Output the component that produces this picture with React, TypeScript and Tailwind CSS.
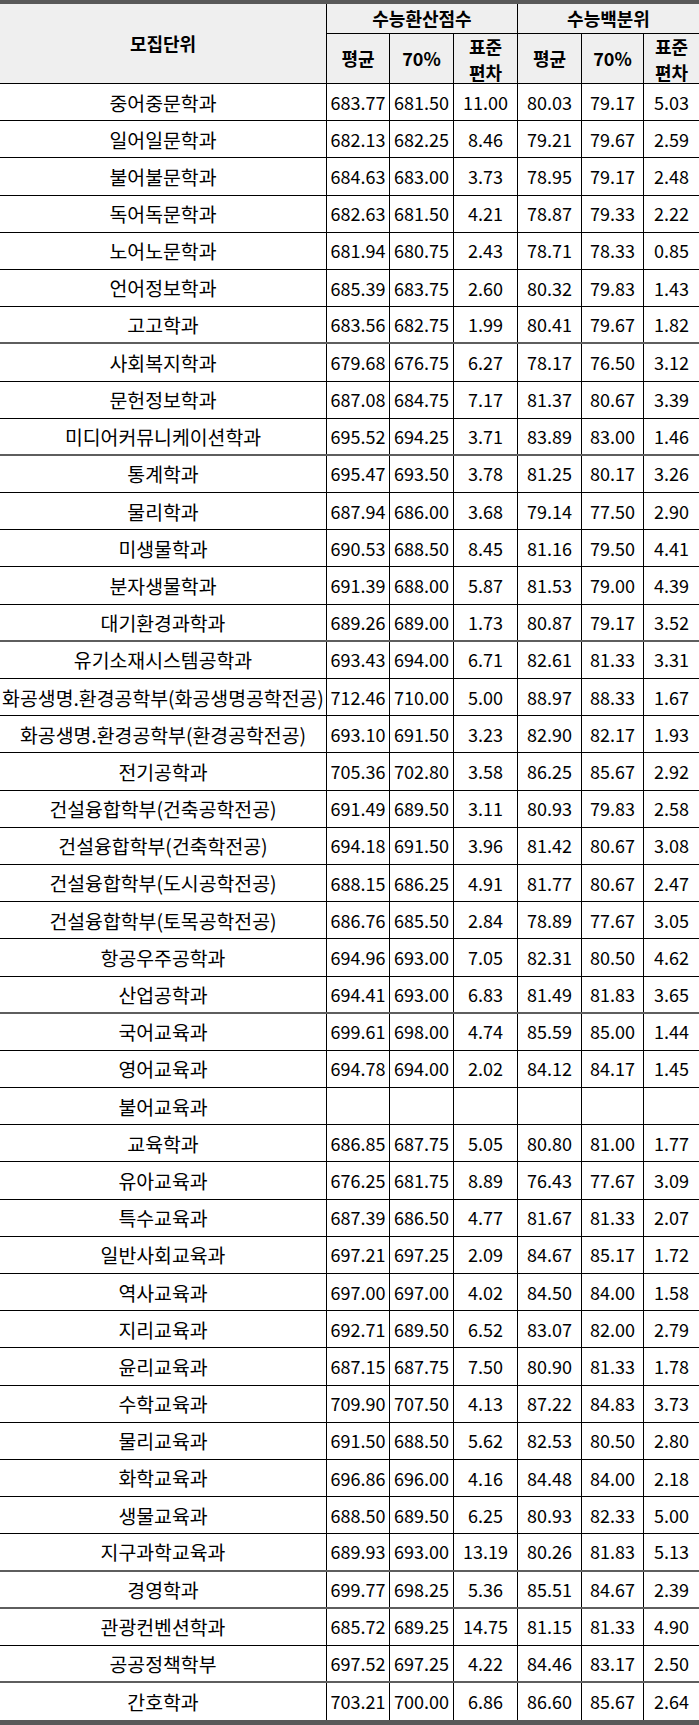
type Row = {
    name: string;
    v: string[];
    thick?: boolean;
};

const rows: Row[] = [
    { name: '중어중문학과', v: ['683.77', '681.50', '11.00', '80.03', '79.17', '5.03'] },
    { name: '일어일문학과', v: ['682.13', '682.25', '8.46', '79.21', '79.67', '2.59'] },
    { name: '불어불문학과', v: ['684.63', '683.00', '3.73', '78.95', '79.17', '2.48'] },
    { name: '독어독문학과', v: ['682.63', '681.50', '4.21', '78.87', '79.33', '2.22'] },
    { name: '노어노문학과', v: ['681.94', '680.75', '2.43', '78.71', '78.33', '0.85'] },
    { name: '언어정보학과', v: ['685.39', '683.75', '2.60', '80.32', '79.83', '1.43'] },
    { name: '고고학과', v: ['683.56', '682.75', '1.99', '80.41', '79.67', '1.82'], thick: true },
    { name: '사회복지학과', v: ['679.68', '676.75', '6.27', '78.17', '76.50', '3.12'] },
    { name: '문헌정보학과', v: ['687.08', '684.75', '7.17', '81.37', '80.67', '3.39'] },
    { name: '미디어커뮤니케이션학과', v: ['695.52', '694.25', '3.71', '83.89', '83.00', '1.46'], thick: true },
    { name: '통계학과', v: ['695.47', '693.50', '3.78', '81.25', '80.17', '3.26'] },
    { name: '물리학과', v: ['687.94', '686.00', '3.68', '79.14', '77.50', '2.90'] },
    { name: '미생물학과', v: ['690.53', '688.50', '8.45', '81.16', '79.50', '4.41'] },
    { name: '분자생물학과', v: ['691.39', '688.00', '5.87', '81.53', '79.00', '4.39'] },
    { name: '대기환경과학과', v: ['689.26', '689.00', '1.73', '80.87', '79.17', '3.52'], thick: true },
    { name: '유기소재시스템공학과', v: ['693.43', '694.00', '6.71', '82.61', '81.33', '3.31'] },
    { name: '화공생명.환경공학부(화공생명공학전공)', v: ['712.46', '710.00', '5.00', '88.97', '88.33', '1.67'] },
    { name: '화공생명.환경공학부(환경공학전공)', v: ['693.10', '691.50', '3.23', '82.90', '82.17', '1.93'] },
    { name: '전기공학과', v: ['705.36', '702.80', '3.58', '86.25', '85.67', '2.92'] },
    { name: '건설융합학부(건축공학전공)', v: ['691.49', '689.50', '3.11', '80.93', '79.83', '2.58'] },
    { name: '건설융합학부(건축학전공)', v: ['694.18', '691.50', '3.96', '81.42', '80.67', '3.08'] },
    { name: '건설융합학부(도시공학전공)', v: ['688.15', '686.25', '4.91', '81.77', '80.67', '2.47'] },
    { name: '건설융합학부(토목공학전공)', v: ['686.76', '685.50', '2.84', '78.89', '77.67', '3.05'] },
    { name: '항공우주공학과', v: ['694.96', '693.00', '7.05', '82.31', '80.50', '4.62'] },
    { name: '산업공학과', v: ['694.41', '693.00', '6.83', '81.49', '81.83', '3.65'], thick: true },
    { name: '국어교육과', v: ['699.61', '698.00', '4.74', '85.59', '85.00', '1.44'] },
    { name: '영어교육과', v: ['694.78', '694.00', '2.02', '84.12', '84.17', '1.45'] },
    { name: '불어교육과', v: ['', '', '', '', '', ''] },
    { name: '교육학과', v: ['686.85', '687.75', '5.05', '80.80', '81.00', '1.77'] },
    { name: '유아교육과', v: ['676.25', '681.75', '8.89', '76.43', '77.67', '3.09'] },
    { name: '특수교육과', v: ['687.39', '686.50', '4.77', '81.67', '81.33', '2.07'] },
    { name: '일반사회교육과', v: ['697.21', '697.25', '2.09', '84.67', '85.17', '1.72'] },
    { name: '역사교육과', v: ['697.00', '697.00', '4.02', '84.50', '84.00', '1.58'] },
    { name: '지리교육과', v: ['692.71', '689.50', '6.52', '83.07', '82.00', '2.79'] },
    { name: '윤리교육과', v: ['687.15', '687.75', '7.50', '80.90', '81.33', '1.78'] },
    { name: '수학교육과', v: ['709.90', '707.50', '4.13', '87.22', '84.83', '3.73'] },
    { name: '물리교육과', v: ['691.50', '688.50', '5.62', '82.53', '80.50', '2.80'] },
    { name: '화학교육과', v: ['696.86', '696.00', '4.16', '84.48', '84.00', '2.18'] },
    { name: '생물교육과', v: ['688.50', '689.50', '6.25', '80.93', '82.33', '5.00'] },
    { name: '지구과학교육과', v: ['689.93', '693.00', '13.19', '80.26', '81.83', '5.13'], thick: true },
    { name: '경영학과', v: ['699.77', '698.25', '5.36', '85.51', '84.67', '2.39'], thick: true },
    { name: '관광컨벤션학과', v: ['685.72', '689.25', '14.75', '81.15', '81.33', '4.90'] },
    { name: '공공정책학부', v: ['697.52', '697.25', '4.22', '84.46', '83.17', '2.50'], thick: true },
    { name: '간호학과', v: ['703.21', '700.00', '6.86', '86.60', '85.67', '2.64'] },
];

const cols = 'grid grid-cols-[327px_63px_64px_64px_64px_62px_55px]';

export default function App() {
    return (
        <div
            className="w-[699px] bg-white text-[18px] text-black"
            style={{ fontFamily: '"Noto Sans CJK KR", "Noto Sans", sans-serif' }}
        >
            <div className="border-t-4 border-b-[5px] border-[#595959]">
                {/* header */}
                <div className={`${cols} grid-rows-[30px_50px] bg-[#efefef] font-bold`}>
                    <div className="row-span-2 flex items-center justify-center border-r border-b border-black">
                        모집단위
                    </div>
                    <div className="col-span-3 flex items-center justify-center border-r border-b border-black">
                        수능환산점수
                    </div>
                    <div className="col-span-3 flex items-center justify-center border-b border-black">
                        수능백분위
                    </div>
                    <div className="flex items-center justify-center border-r border-b border-black">평균</div>
                    <div className="flex items-center justify-center border-r border-b border-black">70%</div>
                    <div className="flex flex-col items-center justify-center border-r border-b border-black leading-[26px]">
                        <span>표준</span>
                        <span>편차</span>
                    </div>
                    <div className="flex items-center justify-center border-r border-b border-black">평균</div>
                    <div className="flex items-center justify-center border-r border-b border-black">70%</div>
                    <div className="flex flex-col items-center justify-center border-b border-black leading-[26px]">
                        <span>표준</span>
                        <span>편차</span>
                    </div>
                </div>

                {/* body */}
                {rows.map((r, i) => {
                    const last = i === rows.length - 1;
                    const line = last ? '' : r.thick ? 'border-b-2 border-[#5e5e5e]' : 'border-b border-black';
                    return (
                        <div key={r.name} className={`${cols} h-[37.2px] ${line}`}>
                            <div className="flex items-center justify-center whitespace-nowrap overflow-visible border-r border-black text-[19.4px]">
                                {r.name}
                            </div>
                            {r.v.map((n, j) => (
                                <div
                                    key={j}
                                    className={`flex items-center justify-center whitespace-nowrap ${j < 5 ? 'border-r border-black' : ''}`}
                                >
                                    {n}
                                </div>
                            ))}
                        </div>
                    );
                })}
            </div>
        </div>
    );
}
